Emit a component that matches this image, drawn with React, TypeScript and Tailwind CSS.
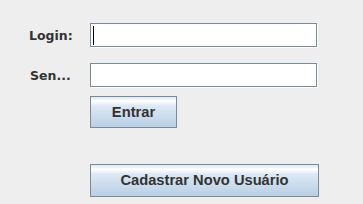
import React from 'react';

const Field: React.FC<{ caret?: boolean }> = ({ caret }) => (
  <div className="w-[227px] h-[24px] bg-white border border-[#7a8a99] shadow-[1px_1px_0_#ffffff] flex items-center pl-[2px]">
    {caret && <div className="w-px h-[19px] bg-black" />}
  </div>
);

const MetalButton: React.FC<{ label: string; className: string }> = ({ label, className }) => (
  <button
    className={`${className} border border-[#7a8a99] bg-[linear-gradient(#dde8f3_0%,#ffffff_14%,#dde8f3_30%,#b8cfe5_100%)] text-[#333333] font-bold text-[14.7px] flex items-center justify-center`}
    style={{ fontFamily: '"Liberation Sans", Arial, sans-serif' }}
  >
    {label}
  </button>
);

const App: React.FC = () => {
  return (
    <div className="w-[363px] h-[204px] bg-[#eeeeee] pt-[23px] pl-[29px] overflow-hidden">
      <div className="flex flex-col" style={{ fontFamily: '"DejaVu Sans", sans-serif' }}>
        <div className="flex items-center">
          <span className="w-[61px] text-[12.5px] font-bold text-[#333333] pt-[2px]">Login:</span>
          <Field caret />
        </div>
        <div className="flex items-center mt-[16px]">
          <span className="w-[61px] text-[12.5px] font-bold text-[#333333] pt-[2px] pl-px">Sen...</span>
          <Field />
        </div>
        <div className="pl-[61px] mt-[9px]">
          <MetalButton label="Entrar" className="w-[87px] h-[32px]" />
        </div>
        <div className="pl-[61px] mt-[36px]">
          <MetalButton label="Cadastrar Novo Usuário" className="w-[229px] h-[33px]" />
        </div>
      </div>
    </div>
  );
};

export default App;
